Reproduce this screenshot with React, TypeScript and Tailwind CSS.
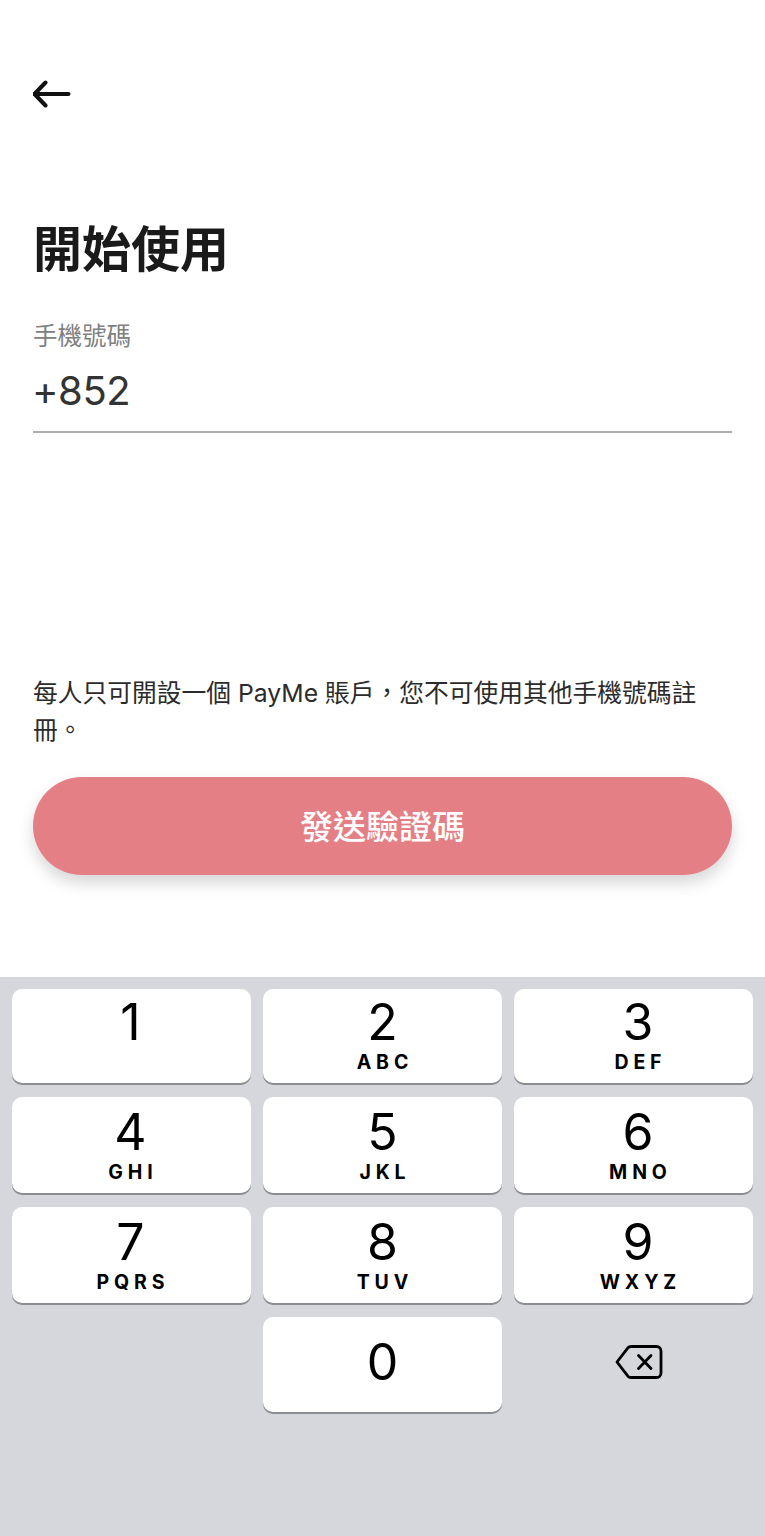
const cjk = "font-['Inter','Noto_Sans_CJK_TC',sans-serif]";

const rows = [
  [
    { n: "1", l: "" },
    { n: "2", l: "ABC" },
    { n: "3", l: "DEF" },
  ],
  [
    { n: "4", l: "GHI" },
    { n: "5", l: "JKL" },
    { n: "6", l: "MNO" },
  ],
  [
    { n: "7", l: "PQRS" },
    { n: "8", l: "TUV" },
    { n: "9", l: "WXYZ" },
  ],
];

function Key({ n, l, className }: { n: string; l: string; className: string }) {
  return (
    <div className={`${className} flex flex-col items-center rounded-[10px] bg-white shadow-[0_2px_0_#8b8d92]`}>
      <span className="h-[54px] text-[50px] leading-[54px] text-black">{n}</span>
      <span className="mt-[3px] pl-[0.25em] text-[19.5px] font-bold leading-[20px] tracking-[0.25em] text-black">{l}</span>
    </div>
  );
}

const rowClass = ["h-[94px] pt-[6px]", "h-[96px] pt-[8px]", "h-[96px] pt-[8px]"];
const colClass = ["pr-[2px]", "", "pl-[9px]"];

export default function App() {
  return (
    <div className={`${cjk} flex h-[1536px] w-[765px] flex-col overflow-hidden bg-white`}>
      <div className="flex h-[977px] flex-col px-[33px]">
        <div className="pt-[80px]">
          <svg width="38" height="28" viewBox="0 0 38 28" fill="none" stroke="#111" strokeWidth="4" strokeLinecap="round" strokeLinejoin="round" className="block">
            <path d="M1.5 14H35.5" />
            <path d="M12.5 2.5L1.5 14L12.5 25.5" />
          </svg>
        </div>
        <h1 className="mt-[114px] text-[49px] font-bold leading-[56px] text-[#1a1a1a]">開始使用</h1>
        <div className="mt-[42px] text-[24.5px] leading-[32px] text-[#80807f]">手機號碼</div>
        <div className="-ml-px mt-[11px] h-[68px] text-[40px] leading-[56px] tracking-[-0.4px] text-[#333]">+852</div>
        <div className="h-[2px] w-[699px] bg-[#aeaeae]" />
        <p className="mt-[242px] w-[680px] text-[24.75px] leading-[37px] text-[#2b2b2b]">
          每人只可開設一個 PayMe 賬戶，您不可使用其他手機號碼註冊。
        </p>
        <button className="mt-[28px] flex h-[98px] w-[699px] items-center justify-center rounded-full bg-[#e57f86] pt-[3px] text-[33px] font-medium text-white shadow-[0_8px_16px_rgba(0,0,0,0.16)]">
          發送驗證碼
        </button>
      </div>
      <div className="flex-1 bg-[#d5d7dd] px-[12px] pt-[12px]">
        <div className="grid grid-cols-3 gap-x-[12px] gap-y-[14px]">
          {rows.map((row, i) =>
            row.map((k, j) => <Key key={k.n} n={k.n} l={k.l} className={`${rowClass[i]} ${colClass[j]}`} />),
          )}
          <div />
          <Key n="0" l="" className="h-[95px] pt-[18px]" />
          <div className="flex items-center justify-center pb-[5px] pl-[10px]">
            <svg width="48" height="36" viewBox="0 0 48 36" fill="none" stroke="#000" strokeWidth="2.8" strokeLinecap="round" strokeLinejoin="round">
              <path d="M16 2.5H41.5C44 2.5 46 4.5 46 7V29C46 31.5 44 33.5 41.5 33.5H16C14.8 33.5 13.7 33 12.9 32.2L2 18L12.9 3.8C13.7 3 14.8 2.5 16 2.5Z" />
              <path d="M23.5 11.5L36 24.5M36 11.5L23.5 24.5" />
            </svg>
          </div>
        </div>
      </div>
    </div>
  );
}
